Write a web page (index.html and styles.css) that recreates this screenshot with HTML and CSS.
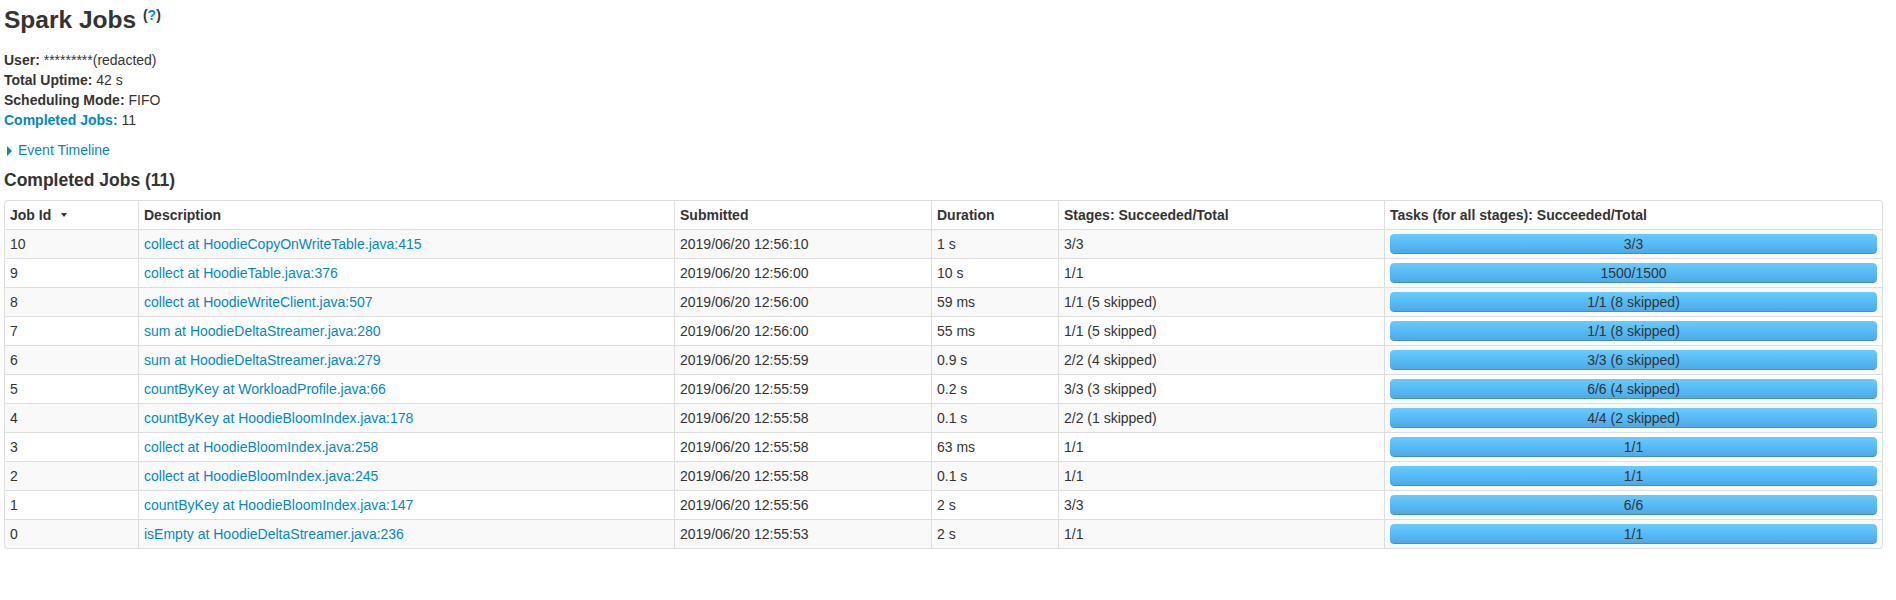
FILE: index.html
```html
<!DOCTYPE html>
<html>
<head>
<meta charset="utf-8">
<title>Spark Jobs</title>
<link rel="stylesheet" href="styles.css">
</head>
<body>
<div class="page">
  <h3 class="title">Spark Jobs <sup class="help">(<a href="#">?</a>)</sup></h3>
  <ul class="info">
    <li><strong>User:</strong> *********(redacted)</li>
    <li><strong>Total Uptime:</strong> 42 s</li>
    <li><strong>Scheduling Mode:</strong> FIFO</li>
    <li><a href="#completed"><strong>Completed Jobs:</strong></a> 11</li>
  </ul>
  <div class="timeline"><span class="arrow-closed"></span><a href="#">Event Timeline</a></div>
  <h4 class="section">Completed Jobs (11)</h4>
  <table class="jobs">
    <thead>
      <tr>
        <th class="c-id">Job Id<span class="sort"></span></th>
        <th class="c-desc">Description</th>
        <th class="c-sub">Submitted</th>
        <th class="c-dur">Duration</th>
        <th class="c-stages">Stages: Succeeded/Total</th>
        <th class="c-tasks">Tasks (for all stages): Succeeded/Total</th>
      </tr>
    </thead>
    <tbody>
      <tr><td>10</td><td><a href="#">collect at HoodieCopyOnWriteTable.java:415</a></td><td>2019/06/20 12:56:10</td><td>1 s</td><td>3/3</td><td><div class="progress"><div class="bar"></div><span class="ptext">3/3</span></div></td></tr>
      <tr><td>9</td><td><a href="#">collect at HoodieTable.java:376</a></td><td>2019/06/20 12:56:00</td><td>10 s</td><td>1/1</td><td><div class="progress"><div class="bar"></div><span class="ptext">1500/1500</span></div></td></tr>
      <tr><td>8</td><td><a href="#">collect at HoodieWriteClient.java:507</a></td><td>2019/06/20 12:56:00</td><td>59 ms</td><td>1/1 (5 skipped)</td><td><div class="progress"><div class="bar"></div><span class="ptext">1/1 (8 skipped)</span></div></td></tr>
      <tr><td>7</td><td><a href="#">sum at HoodieDeltaStreamer.java:280</a></td><td>2019/06/20 12:56:00</td><td>55 ms</td><td>1/1 (5 skipped)</td><td><div class="progress"><div class="bar"></div><span class="ptext">1/1 (8 skipped)</span></div></td></tr>
      <tr><td>6</td><td><a href="#">sum at HoodieDeltaStreamer.java:279</a></td><td>2019/06/20 12:55:59</td><td>0.9 s</td><td>2/2 (4 skipped)</td><td><div class="progress"><div class="bar"></div><span class="ptext">3/3 (6 skipped)</span></div></td></tr>
      <tr><td>5</td><td><a href="#">countByKey at WorkloadProfile.java:66</a></td><td>2019/06/20 12:55:59</td><td>0.2 s</td><td>3/3 (3 skipped)</td><td><div class="progress"><div class="bar"></div><span class="ptext">6/6 (4 skipped)</span></div></td></tr>
      <tr><td>4</td><td><a href="#">countByKey at HoodieBloomIndex.java:178</a></td><td>2019/06/20 12:55:58</td><td>0.1 s</td><td>2/2 (1 skipped)</td><td><div class="progress"><div class="bar"></div><span class="ptext">4/4 (2 skipped)</span></div></td></tr>
      <tr><td>3</td><td><a href="#">collect at HoodieBloomIndex.java:258</a></td><td>2019/06/20 12:55:58</td><td>63 ms</td><td>1/1</td><td><div class="progress"><div class="bar"></div><span class="ptext">1/1</span></div></td></tr>
      <tr><td>2</td><td><a href="#">collect at HoodieBloomIndex.java:245</a></td><td>2019/06/20 12:55:58</td><td>0.1 s</td><td>1/1</td><td><div class="progress"><div class="bar"></div><span class="ptext">1/1</span></div></td></tr>
      <tr><td>1</td><td><a href="#">countByKey at HoodieBloomIndex.java:147</a></td><td>2019/06/20 12:55:56</td><td>2 s</td><td>3/3</td><td><div class="progress"><div class="bar"></div><span class="ptext">6/6</span></div></td></tr>
      <tr><td>0</td><td><a href="#">isEmpty at HoodieDeltaStreamer.java:236</a></td><td>2019/06/20 12:55:53</td><td>2 s</td><td>1/1</td><td><div class="progress"><div class="bar"></div><span class="ptext">1/1</span></div></td></tr>
    </tbody>
  </table>
</div>
</body>
</html>
```
FILE: styles.css
```css
* {
  box-sizing: border-box;
}

html, body {
  margin: 0;
  padding: 0;
  background: #ffffff;
}

body {
  font-family: "Liberation Sans", Arial, Helvetica, sans-serif;
  font-size: 14px;
  line-height: 20px;
  color: #333333;
}

a {
  color: #0088cc;
  text-decoration: none;
}

.page {
  padding: 0 13px 0 4px;
}

.title {
  margin: 0 0 10px;
  font-size: 24.5px;
  line-height: 40px;
  font-weight: bold;
  color: #333333;
}

.help {
  font-size: 14px;
  line-height: 0;
  vertical-align: 8px;
  font-weight: bold;
}

.info {
  list-style: none;
  margin: 0 0 10px;
  padding: 0;
}

.info li {
  line-height: 20px;
}

.timeline {
  line-height: 20px;
}

.arrow-closed {
  display: inline-block;
  width: 0;
  height: 0;
  border-top: 5px solid transparent;
  border-bottom: 5px solid transparent;
  border-left: 5px solid #0088cc;
  margin: 0 6px 1px 3px;
  vertical-align: middle;
}

.section {
  margin: 10px 0;
  font-size: 17.5px;
  line-height: 20px;
  font-weight: bold;
  color: #333333;
}

.jobs {
  width: 100%;
  table-layout: fixed;
  border-collapse: separate;
  border-spacing: 0;
  border: 1px solid #dddddd;
  border-left: 0;
  border-radius: 4px;
}

.jobs th,
.jobs td {
  padding: 4px 5px;
  line-height: 20px;
  text-align: left;
  vertical-align: top;
  border-left: 1px solid #dddddd;
  border-top: 1px solid #dddddd;
  white-space: nowrap;
  overflow: hidden;
}

.jobs th {
  border-top: 0;
  font-weight: bold;
  background: #ffffff;
}

.jobs thead th:first-child {
  border-top-left-radius: 4px;
}

.jobs thead th:last-child {
  border-top-right-radius: 4px;
}

.jobs tbody tr:last-child td:first-child {
  border-bottom-left-radius: 4px;
}

.jobs tbody tr:last-child td:last-child {
  border-bottom-right-radius: 4px;
}

.jobs tbody tr:nth-child(odd) td {
  background: #f9f9f9;
}

.jobs tbody tr:nth-child(even) td {
  background: #ffffff;
}

.c-id { width: 134px; }
.c-desc { width: 536px; }
.c-sub { width: 257px; }
.c-dur { width: 127px; }
.c-stages { width: 326px; }

.sort {
  display: inline-block;
  width: 0;
  height: 0;
  border-left: 3px solid transparent;
  border-right: 3px solid transparent;
  border-top: 4px solid #333333;
  margin-left: 10px;
  vertical-align: middle;
  position: relative;
  top: -1px;
}

.progress {
  display: grid;
  height: 20px;
  border-radius: 4px;
  overflow: hidden;
  background: #f7f7f7;
}

.progress .bar,
.progress .ptext {
  grid-area: 1 / 1;
}

.bar {
  width: 100%;
  height: 20px;
  background-color: #5bbcf5;
  background-image: linear-gradient(to bottom, #66ccff, #4aa9e9);
  box-shadow: inset 0 -1px 0 rgba(0, 0, 0, 0.15);
  border-radius: 4px;
}

.ptext {
  text-align: center;
  line-height: 20px;
  color: #333333;
}
```
